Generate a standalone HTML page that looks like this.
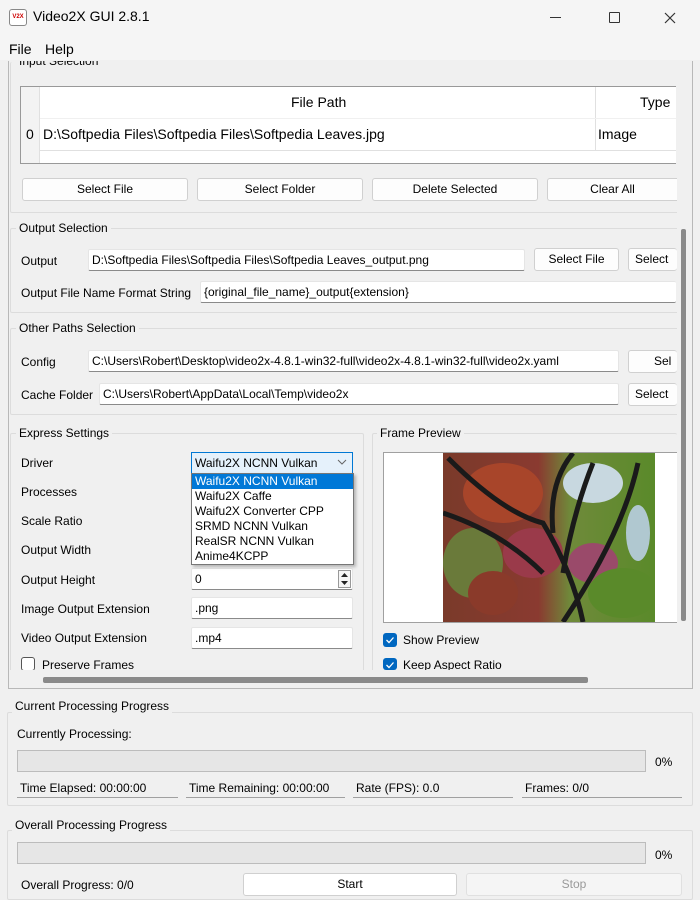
<!DOCTYPE html>
<html><head><meta charset="utf-8"><style>
*{box-sizing:border-box;margin:0;padding:0}
body{width:700px;height:891px;overflow:hidden;background:#f0f0f0;font-family:"Liberation Sans",sans-serif;font-size:12px;color:#000;position:relative}
.a{position:absolute;white-space:nowrap}
.inp{position:absolute;background:#fff;border:1px solid #e5e5e5;border-bottom:1px solid #8a8a8a;height:22px;line-height:20px;padding-left:3px;white-space:nowrap;overflow:hidden;border-radius:2px}
.btn{position:absolute;background:#fdfdfd;border:1px solid #d0d0d0;border-radius:3px;height:23px;line-height:21px;text-align:center;white-space:nowrap;overflow:hidden}
.grp{position:absolute;border:1px solid #dcdcdc;border-radius:2px}
.lbl{position:absolute;background:#f0f0f0;padding:0 3px;white-space:nowrap}
.cb{position:absolute;width:14px;height:14px;border-radius:3px;background:#0067c0}
.cb svg{position:absolute;left:2px;top:2px}
.und{position:absolute;border-bottom:1px solid #a0a0a0;height:18px;line-height:17px;padding-left:3px}
</style></head><body>
<div class="a" style="left:0;top:0;width:700px;height:60px;background:#f5f5f5"></div>
<div class="a" style="left:9px;top:9px;width:18px;height:17px;border:1px solid #888;border-radius:3px;background:#fff;font-size:6px;font-weight:bold;color:#c00;line-height:15px;text-align:center">V2X</div>
<div class="a" style="left:33px;top:8px;font-size:14px">Video2X GUI 2.8.1</div>
<div class="a" style="left:550px;top:17px;width:11px;height:1px;background:#333"></div>
<div class="a" style="left:609px;top:12px;width:11px;height:11px;border:1px solid #333;border-radius:1px"></div>
<svg class="a" style="left:664px;top:12px" width="12" height="12"><path d="M1 1L11 11M11 1L1 11" stroke="#333" stroke-width="1.2"/></svg>
<div class="a" style="left:9px;top:41px;font-size:14px">File</div>
<div class="a" style="left:45px;top:41px;font-size:14px">Help</div>
<!-- scroll frame -->
<div class="a" style="left:8px;top:61px;width:685px;height:628px;border:1px solid #b8b8b8;border-top:none;background:#f0f0f0"></div>
<!-- input selection -->
<div class="grp" style="left:10px;top:62px;width:680px;height:151px;border-top:none"></div>
<div class="a" style="left:19px;top:61px;font-size:12px;height:8px;overflow:hidden;line-height:0px">Input Selection</div>
<div class="a" style="left:20px;top:86px;width:656px;height:78px;background:#fff;border:1px solid #999;border-right:none"></div>
<div class="a" style="left:21px;top:87px;width:18px;height:76px;background:#f3f3f3"></div>
<div class="a" style="left:39px;top:87px;width:1px;height:76px;background:#e0e0e0"></div>
<div class="a" style="left:595px;top:87px;width:1px;height:63px;background:#e0e0e0"></div>
<div class="a" style="left:40px;top:150px;width:636px;height:1px;background:#e0e0e0"></div>
<div class="a" style="left:40px;top:118px;width:636px;height:1px;background:#f0f0f0"></div>
<div class="a" style="left:291px;top:94px;font-size:14px">File Path</div>
<div class="a" style="left:640px;top:94px;font-size:14px">Type</div>
<div class="a" style="left:26px;top:126px;font-size:14px">0</div>
<div class="a" style="left:43px;top:126px;font-size:14px">D:\Softpedia Files\Softpedia Files\Softpedia Leaves.jpg</div>
<div class="a" style="left:598px;top:126px;font-size:14px">Image</div>
<div class="btn" style="left:22px;top:178px;width:166px">Select File</div>
<div class="btn" style="left:197px;top:178px;width:166px">Select Folder</div>
<div class="btn" style="left:372px;top:178px;width:166px">Delete Selected</div>
<div class="btn" style="left:547px;top:178px;width:130px;border-right:none;border-radius:3px 0 0 3px">Clear All</div>
<!-- output selection -->
<div class="grp" style="left:10px;top:228px;width:680px;height:85px"></div>
<div class="lbl" style="left:16px;top:221px">Output Selection</div>
<div class="a" style="left:21px;top:254px">Output</div>
<div class="inp" style="left:88px;top:249px;width:437px">D:\Softpedia Files\Softpedia Files\Softpedia Leaves_output.png</div>
<div class="btn" style="left:534px;top:248px;width:85px">Select File</div>
<div class="btn" style="left:628px;top:248px;width:49px;border-right:none;text-align:left;padding-left:6px">Select</div>
<div class="a" style="left:21px;top:286px">Output File Name Format String</div>
<div class="inp" style="left:200px;top:281px;width:476px;border-right:none">{original_file_name}_output{extension}</div>
<!-- other paths -->
<div class="grp" style="left:10px;top:328px;width:680px;height:87px"></div>
<div class="lbl" style="left:16px;top:321px">Other Paths Selection</div>
<div class="a" style="left:21px;top:355px">Config</div>
<div class="inp" style="left:88px;top:350px;width:531px">C:\Users\Robert\Desktop\video2x-4.8.1-win32-full\video2x-4.8.1-win32-full\video2x.yaml</div>
<div class="btn" style="left:628px;top:350px;width:49px;border-right:none;text-align:left;padding-left:25px">Sel</div>
<div class="a" style="left:21px;top:388px">Cache Folder</div>
<div class="inp" style="left:99px;top:383px;width:520px">C:\Users\Robert\AppData\Local\Temp\video2x</div>
<div class="btn" style="left:628px;top:383px;width:49px;border-right:none;text-align:left;padding-left:6px">Select</div>
<!-- express -->
<div class="grp" style="left:10px;top:433px;width:354px;height:250px;border-bottom:none"></div>
<div class="lbl" style="left:16px;top:426px">Express Settings</div>
<div class="a" style="left:21px;top:456px">Driver</div>
<div class="a" style="left:21px;top:485px">Processes</div>
<div class="a" style="left:21px;top:514px">Scale Ratio</div>
<div class="a" style="left:21px;top:543px">Output Width</div>
<div class="a" style="left:21px;top:573px">Output Height</div>
<div class="a" style="left:21px;top:602px">Image Output Extension</div>
<div class="a" style="left:21px;top:631px">Video Output Extension</div>
<div class="inp" style="left:191px;top:568px;width:162px">0</div>
<div class="a" style="left:338px;top:570px;width:13px;height:18px;border:1px solid #999;background:#f5f5f5"></div>
<svg class="a" style="left:340px;top:571px" width="9" height="16"><path d="M1 6L4.5 2L8 6ZM1 10L4.5 14L8 10Z" fill="#222"/></svg>
<div class="inp" style="left:191px;top:597px;width:162px">.png</div>
<div class="inp" style="left:191px;top:627px;width:162px">.mp4</div>
<div class="a" style="left:21px;top:657px;width:14px;height:14px;border:1px solid #555;border-radius:3px;background:#fff"></div>
<div class="a" style="left:42px;top:658px">Preserve Frames</div>
<!-- combo -->
<div class="a" style="left:191px;top:452px;width:162px;height:22px;background:#e5f1fb;border:1px solid #0078d4;line-height:20px;padding-left:3px">Waifu2X NCNN Vulkan</div>
<svg class="a" style="left:337px;top:459px" width="10" height="6"><path d="M1 1L5 5L9 1" fill="none" stroke="#666"/></svg>
<div class="a" style="left:191px;top:473px;width:163px;height:92px;background:#fff;border:1px solid #777;box-shadow:2px 2px 3px rgba(0,0,0,.25);line-height:15px">
<div style="background:#0078d7;color:#fff;padding-left:3px">Waifu2X NCNN Vulkan</div>
<div style="padding-left:3px">Waifu2X Caffe</div>
<div style="padding-left:3px">Waifu2X Converter CPP</div>
<div style="padding-left:3px">SRMD NCNN Vulkan</div>
<div style="padding-left:3px">RealSR NCNN Vulkan</div>
<div style="padding-left:3px">Anime4KCPP</div>
</div>
<!-- frame preview -->
<div class="grp" style="left:372px;top:433px;width:305px;height:250px;border-bottom:none;border-right:none"></div>
<div class="lbl" style="left:377px;top:426px">Frame Preview</div>
<div class="a" style="left:383px;top:452px;width:294px;height:171px;background:#fff;border:1px solid #a0a0a0;border-right:none"></div>
<svg class="a" style="left:443px;top:453px" width="212" height="169">
<defs><linearGradient id="g" x1="0" y1="0" x2="1" y2="0"><stop offset="0" stop-color="#7a3a2a"/><stop offset=".45" stop-color="#8a3a30"/><stop offset=".6" stop-color="#6f8a3a"/><stop offset="1" stop-color="#5a8a2a"/></linearGradient></defs>
<rect width="212" height="169" fill="url(#g)"/>
<ellipse cx="150" cy="30" rx="30" ry="20" fill="#c8d8e0"/>
<ellipse cx="195" cy="80" rx="12" ry="28" fill="#b0c8d0"/>
<ellipse cx="60" cy="40" rx="40" ry="30" fill="#a8452a"/>
<ellipse cx="90" cy="100" rx="30" ry="25" fill="#9a3a4a"/>
<ellipse cx="30" cy="110" rx="30" ry="35" fill="#6a7a3a"/>
<ellipse cx="150" cy="110" rx="25" ry="20" fill="#9a4a6a"/>
<ellipse cx="180" cy="140" rx="35" ry="25" fill="#5a8a2a"/>
<ellipse cx="50" cy="140" rx="25" ry="22" fill="#8a3a2a"/>
<path d="M5 5Q60 60 100 70Q130 120 140 169M0 60Q60 80 100 120M130 0Q105 30 110 80M150 10Q130 60 120 120M195 10Q180 80 120 169" stroke="#1a1a1a" stroke-width="5" fill="none"/>
</svg>
<div class="cb" style="left:383px;top:633px"><svg width="10" height="10"><path d="M1.5 5L4 7.5L8.5 2.5" stroke="#fff" stroke-width="1.3" fill="none"/></svg></div>
<div class="a" style="left:403px;top:633px">Show Preview</div>
<div class="cb" style="left:383px;top:658px;height:12px"><svg width="10" height="10"><path d="M1.5 5L4 7.5L8.5 2.5" stroke="#fff" stroke-width="1.3" fill="none"/></svg></div>
<div class="a" style="left:403px;top:658px;height:12px;overflow:hidden">Keep Aspect Ratio</div>
<div class="a" style="left:10px;top:670px;width:670px;height:18px;background:#f0f0f0"></div>
<div class="a" style="left:43px;top:677px;width:545px;height:6px;background:#8a8a8a;border-radius:2px"></div>
<!-- vertical scroll track -->
<div class="a" style="left:677px;top:62px;width:15px;height:626px;background:#f0f0f0"></div>
<div class="a" style="left:681px;top:229px;width:5px;height:392px;background:#8a8a8a;border-radius:2px"></div>
<!-- current progress -->
<div class="grp" style="left:7px;top:712px;width:686px;height:94px"></div>
<div class="lbl" style="left:12px;top:699px">Current Processing Progress</div>
<div class="a" style="left:17px;top:727px">Currently Processing:</div>
<div class="a" style="left:17px;top:750px;width:629px;height:22px;background:#e6e6e6;border:1px solid #bcbcbc"></div>
<div class="a" style="left:655px;top:755px">0%</div>
<div class="und" style="left:17px;top:780px;width:161px">Time Elapsed: 00:00:00</div>
<div class="und" style="left:186px;top:780px;width:159px">Time Remaining: 00:00:00</div>
<div class="und" style="left:353px;top:780px;width:160px">Rate (FPS): 0.0</div>
<div class="und" style="left:522px;top:780px;width:160px">Frames: 0/0</div>
<!-- overall -->
<div class="grp" style="left:7px;top:830px;width:686px;height:70px"></div>
<div class="lbl" style="left:12px;top:818px">Overall Processing Progress</div>
<div class="a" style="left:17px;top:842px;width:629px;height:22px;background:#e6e6e6;border:1px solid #bcbcbc"></div>
<div class="a" style="left:655px;top:848px">0%</div>
<div class="a" style="left:21px;top:878px">Overall Progress: 0/0</div>
<div class="btn" style="left:243px;top:873px;width:214px;background:#fff">Start</div>
<div class="btn" style="left:466px;top:873px;width:216px;background:#f5f5f5;color:#999;border-color:#e0e0e0">Stop</div>
</body></html>
